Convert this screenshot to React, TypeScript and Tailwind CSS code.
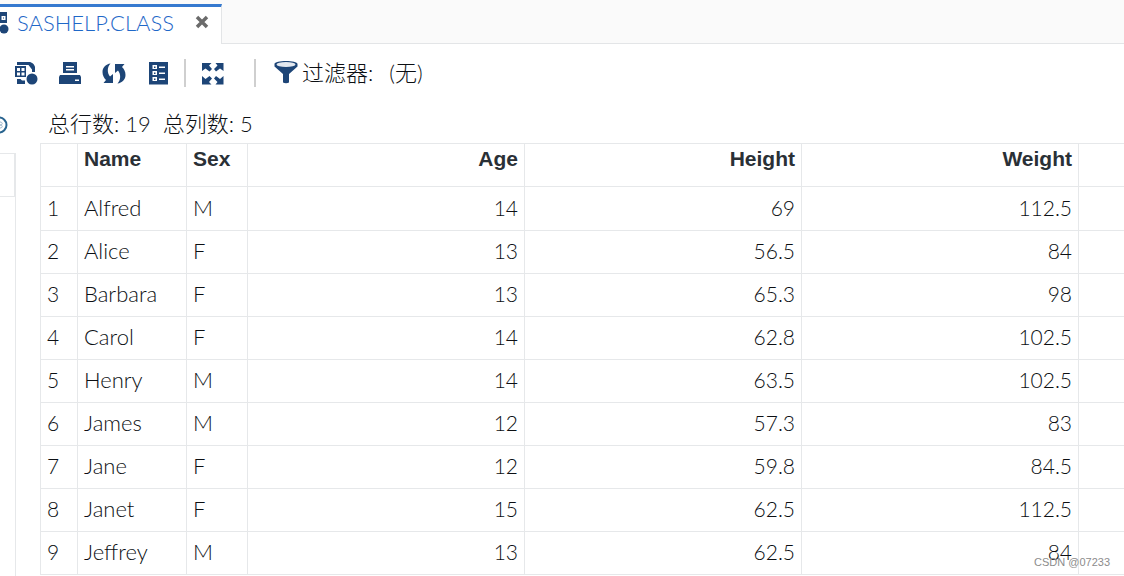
import type { ReactNode } from "react";

type Student = {
  name: string;
  sex: string;
  age: number;
  height: number;
  weight: number;
};

const students: Student[] = [
  { name: "Alfred", sex: "M", age: 14, height: 69, weight: 112.5 },
  { name: "Alice", sex: "F", age: 13, height: 56.5, weight: 84 },
  { name: "Barbara", sex: "F", age: 13, height: 65.3, weight: 98 },
  { name: "Carol", sex: "F", age: 14, height: 62.8, weight: 102.5 },
  { name: "Henry", sex: "M", age: 14, height: 63.5, weight: 102.5 },
  { name: "James", sex: "M", age: 12, height: 57.3, weight: 83 },
  { name: "Jane", sex: "F", age: 12, height: 59.8, weight: 84.5 },
  { name: "Janet", sex: "F", age: 15, height: 62.5, weight: 112.5 },
  { name: "Jeffrey", sex: "M", age: 13, height: 62.5, weight: 84 },
];

const TableIcon = () => (
  <svg width="24" height="24" viewBox="0 0 24 24" fill="none">
    <path d="M3 1h12c3 0 5.500 2.500 6 5v5h-3V8.500L14.500 4H3z" fill="#1d4577" />
    <path d="M1 5h11v11H1z" fill="#1d4577" />
    <path d="M3 7h3v3H3zM7.500 7h3v3h-3zM3 11.500h3v3H3zM7.500 11.500h3v3h-3z" fill="#fff" />
    <path d="M3 18h3.500l1.500 1.500h3V23H3z" fill="#1d4577" />
    <circle cx="18" cy="18" r="5.500" fill="#1d4577" />
  </svg>
);

const PrintIcon = () => (
  <svg width="24" height="24" viewBox="0 0 24 24" fill="#1d4577">
    <path d="M5 1h14v11H5z" />
    <path d="M8 5h8v1.500H8zM8 8h8v1.500H8z" fill="#fff" />
    <path d="M2 14h20l1 2v7H1v-7z" />
    <path d="M17 18.500h4V20h-4z" fill="#fff" />
  </svg>
);

const RefreshIcon = () => (
  <svg width="24" height="24" viewBox="0 0 24 24" fill="#1d4577">
    <path d="M8.500 2.500C4 3 .500 6.500 .500 11c0 3.500 1.500 6 3.500 8L1.500 22H11v-9l-3 2.500C5 12 5 6 8.500 2.500z" />
    <path d="M15.500 22.500c4.500-.500 8-4 8-8.500 0-3.500-1.500-6-3.500-8l2.500-3H13v9l3-2.500c3 3.500 3 9.500-.500 13z" />
  </svg>
);

const ListIcon = () => (
  <svg width="24" height="24" viewBox="0 0 24 24">
    <path d="M3 1h19v22.500H3z" fill="#1d4577" />
    <path d="M6.500 4h4.500v4H6.500zM6.500 10h4.500v4H6.500zM6.500 16h4.500v4H6.500zM13 5.500h6V7h-6zM13 11.500h6V13h-6zM13 17.500h6V19h-6z" fill="#fff" />
    <path d="M8 5.500h1.500V7H8zM8 11.500h1.500V13H8zM8 17.500h1.500V19H8z" fill="#1d4577" />
  </svg>
);

const ExpandIcon = () => (
  <svg width="24" height="24" viewBox="0 0 24 24" fill="#1d4577">
    <path d="M2 2h9.500L9 4.500l3 3.500-2.500 2.500-4-3L2 10z" />
    <path d="M23.500 2h-8l2 2.500L14 8l2 2.500 4-3 3.500 2.500z" />
    <path d="M2 23.500h9.500L9 21l3-3.500L9.500 15l-4 3L2 15z" />
    <path d="M23.500 23.500h-8l2-2.500-3.500-3.500 2-2.500 4 3 3.500-3z" />
  </svg>
);

const FilterIcon = () => (
  <svg width="24" height="24" viewBox="0 0 24 24" fill="#1d4577">
    <path d="M.500 3C.500-1 23.500-1 23.500 3v2.500L15 13v8.500c-1.500 1-4.500 1-6 0V13L.500 5.500z" />
    <ellipse cx="12" cy="3.500" rx="9.500" ry="2.500" fill="#e3e8ef" />
  </svg>
);

function ToolButton({ label, children }: { label: string; children: ReactNode }) {
  return (
    <button type="button" aria-label={label} className="h-6 w-6 shrink-0">
      {children}
    </button>
  );
}

export default function App() {
  const th = "border border-[#e6e8ea] px-1.5 align-top font-bold";
  const td = "border border-[#e6e8ea] px-1.5 pb-0.5";
  const num = `${td} text-right text-[21px]`;

  return (
    <div className="relative flex h-screen flex-col overflow-hidden bg-white font-['Lato','Noto_Sans_CJK_SC',sans-serif] text-[22px] font-light leading-7 text-[#0c0f13]">
      <header className="flex h-11 shrink-0 bg-[#fafafa] pt-1">
        <div className="flex w-[222px] items-start border-r border-t-3 border-r-[#e3e5e7] border-t-[#3579cf] bg-white pt-1">
          <svg width="9" height="24" viewBox="0 0 9 24" fill="#1d4577" className="shrink-0">
            <path d="M0 1h7v11H0z" />
            <path d="M1.500 5h4v4h-4z" fill="#fff" />
            <path d="M3 6.500h1v1H3z" />
            <circle cx="4" cy="18" r="4.500" />
          </svg>
          <a href="#class" className="ml-2 leading-6 text-[#1f68c8]">
            SASHELP.CLASS
          </a>
          <button type="button" aria-label="关闭" className="mt-1 mr-3 ml-auto flex h-3.5 w-3.5">
            <svg width="14" height="14" viewBox="0 0 14 14" stroke="#6b6b6b" strokeWidth="3.500">
              <path d="M2 2l10 10M12 2L2 12" />
            </svg>
          </button>
        </div>
        <div className="flex-1 border-b border-[#e3e5e7]" />
      </header>

      <div className="flex h-14 shrink-0 items-center gap-3.5 pl-3.5 pt-px">
        <div className="flex gap-5">
          <ToolButton label="表"><TableIcon /></ToolButton>
          <ToolButton label="打印"><PrintIcon /></ToolButton>
          <ToolButton label="刷新"><RefreshIcon /></ToolButton>
          <ToolButton label="列"><ListIcon /></ToolButton>
        </div>
        <div className="h-7 w-0.5 bg-[#cfcfcf]" />
        <ToolButton label="最大化"><ExpandIcon /></ToolButton>
        <div className="ml-4 h-7 w-0.5 bg-[#cfcfcf]" />
        <div className="ml-1 flex items-center gap-1">
          <ToolButton label="过滤器"><FilterIcon /></ToolButton>
          <span>过滤器:</span>
          <span className="ml-3">(无)</span>
        </div>
      </div>

      <div className="flex min-h-0 flex-1">
        <aside className="flex w-4 shrink-0 flex-col">
          <div className="h-[53px] pt-4">
            <svg width="8" height="18" viewBox="0 0 8 18" fill="none">
              <circle cx="-1" cy="9" r="7.500" stroke="#29648f" strokeWidth="2" />
              <path d="M0 6c3 0 3 3 0 3c3 0 3 3 0 3" stroke="#9bb5ca" />
            </svg>
          </div>
          <div className="h-11 border-y border-r-2 border-[#e6e8ea]" />
          <div className="flex-1 border-r border-[#e6e8ea]" />
        </aside>

        <main className="ml-6 min-w-0 flex-1 pt-2.5">
          <div className="flex h-[33px] gap-3 pl-2">
            <span>总行数: 19</span>
            <span>总列数: 5</span>
          </div>
          <table className="w-full table-fixed border-collapse">
            <colgroup>
              <col className="w-[37px]" />
              <col className="w-[109px]" />
              <col className="w-[61px]" />
              <col className="w-[277px]" />
              <col className="w-[277px]" />
              <col className="w-[277px]" />
              <col />
            </colgroup>
            <thead>
              <tr className="h-[43px] text-left font-['Liberation_Sans',sans-serif] text-[21px] leading-[30px] text-[#2a3036]">
                <th className={th} />
                <th className={th}>Name</th>
                <th className={th}>Sex</th>
                <th className={`${th} text-right`}>Age</th>
                <th className={`${th} text-right`}>Height</th>
                <th className={`${th} text-right`}>Weight</th>
                <th className={`${th} border-r-0`} />
              </tr>
            </thead>
            <tbody>
              {students.map((s, i) => (
                <tr key={s.name} className="h-[43px] first:h-11">
                  <td className={`${td} text-[21px]`}>{i + 1}</td>
                  <td className={td}>{s.name}</td>
                  <td className={td}>{s.sex}</td>
                  <td className={num}>{s.age}</td>
                  <td className={num}>{s.height}</td>
                  <td className={num}>{s.weight}</td>
                  <td className={`${td} border-r-0`} />
                </tr>
              ))}
            </tbody>
          </table>
        </main>
      </div>

      <div className="absolute right-3.5 bottom-1.5 font-['Liberation_Sans',sans-serif] text-[11px] leading-4 font-normal text-[#8c8c8c]">
        CSDN @07233
      </div>
    </div>
  );
}
